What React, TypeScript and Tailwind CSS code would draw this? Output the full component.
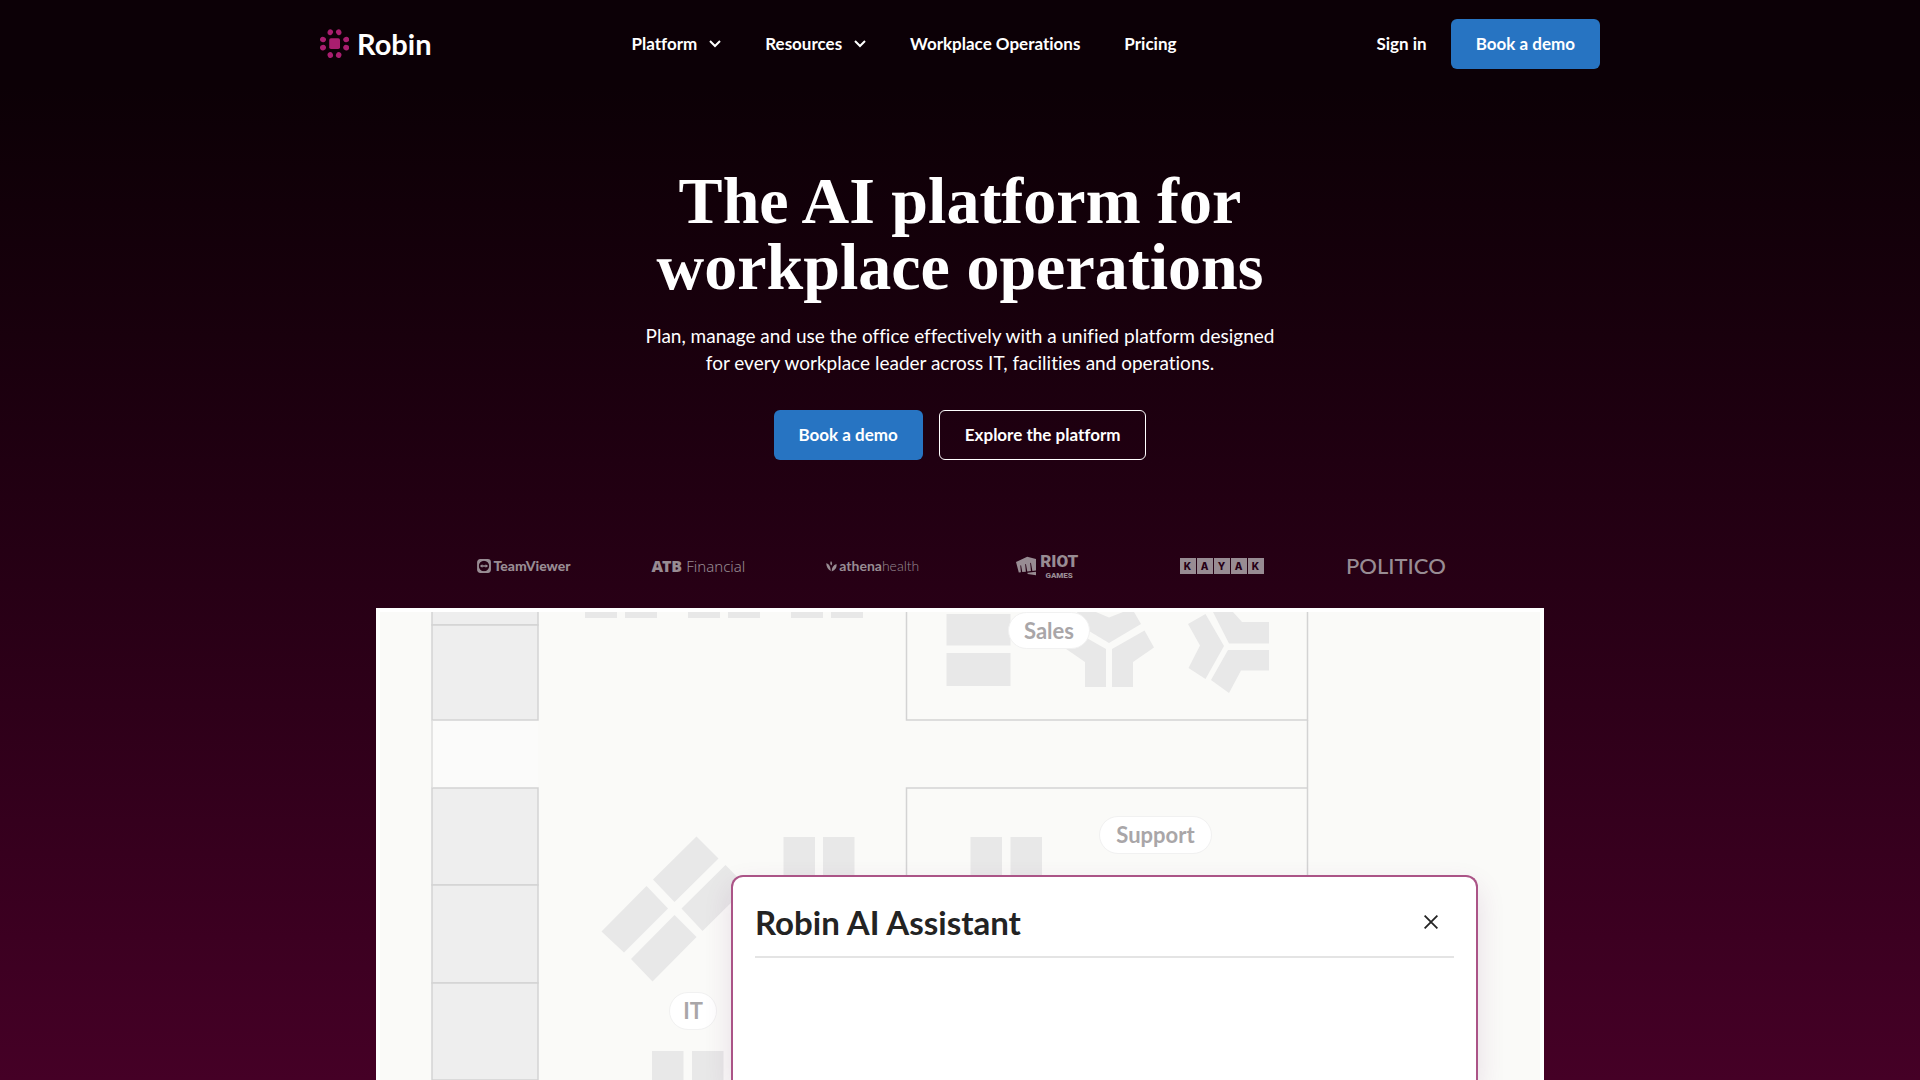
import type { ReactNode } from "react";

const sans = "font-['Lato','Open_Sans',sans-serif] [font-variant-ligatures:none]";

function Chevron() {
  return (
    <svg viewBox="0 0 12 8" className="h-2 w-3" fill="none" stroke="currentColor" strokeWidth="2" aria-hidden="true">
      <path d="M1 1l5 5 5-5" />
    </svg>
  );
}

function RobinLogo() {
  const dots = [
    [10.3, 3.2, 20], [18.7, 3.2, -20], [26.2, 10.5, 70], [26.2, 18.6, -70],
    [18.7, 26, 20], [10.3, 26, -20], [3, 18.6, 70], [3, 10.5, -70],
  ];
  return (
    <a href="#" aria-label="Robin home" className="flex items-center gap-2">
      <svg viewBox="0 0 29 29" className="size-[29px]" fill="#a91e6f" aria-hidden="true">
        <rect x="9.2" y="9.2" width="10.8" height="10.8" rx="1.8" />
        {dots.map(([x, y, r]) => (
          <ellipse key={`${x}-${y}`} cx={x} cy={y} rx="2.7" ry="3" transform={`rotate(${r} ${x} ${y})`} />
        ))}
      </svg>
      <span className="text-[29px] leading-8 font-bold">Robin</span>
    </a>
  );
}

function Header() {
  return (
    <header className="bg-[#0c0006]">
      <div className="mx-auto flex h-[87px] w-full max-w-[1280px] items-center justify-between">
        <RobinLogo />
        <nav aria-label="Main" className="flex w-[545px] items-center justify-between text-[17px] leading-6 font-bold">
          <button type="button" className="flex items-center gap-3">Platform <Chevron /></button>
          <button type="button" className="flex items-center gap-3">Resources <Chevron /></button>
          <a href="#">Workplace Operations</a>
          <a href="#">Pricing</a>
        </nav>
        <div className="flex items-center gap-6 text-[17px] leading-6 font-bold">
          <a href="#">Sign in</a>
          <a href="#" className="flex h-[50px] items-center rounded-md bg-[#2774c2] px-[25px]">Book a demo</a>
        </div>
      </div>
    </header>
  );
}

function LogoCell({ label, children }: { label: string; children: ReactNode }) {
  return (
    <li aria-label={label} className="flex h-8 w-24 items-center justify-center whitespace-nowrap">
      {children}
    </li>
  );
}

function Customers() {
  return (
    <ul className="mx-auto mt-[90px] flex w-full max-w-[968px] items-center justify-between text-[#988c93]">
      <LogoCell label="TeamViewer">
        <svg viewBox="0 0 14 14" className="mr-0.5 size-[14px] shrink-0" aria-hidden="true">
          <rect x="0.8" y="0.8" width="12.4" height="12.4" rx="2.4" fill="none" stroke="currentColor" strokeWidth="1.4" />
          <path fill="currentColor" fillRule="evenodd" d="M1 1h12v12H1zM7 1.8a5.2 5.2 0 100 10.4A5.2 5.2 0 007 1.8z" />
          <path fill="currentColor" d="M2.8 7l2.6-1.8v1.1h3.2V5.2L11.2 7 8.6 8.8V7.7H5.4v1.1z" />
        </svg>
        <span className="text-[14px] leading-5 font-black">TeamViewer</span>
      </LogoCell>
      <LogoCell label="ATB Financial">
        <span className="font-['Noto_Sans',sans-serif] text-[16px] leading-5 font-black">ATB</span>
        <span className="ml-1 font-['Noto_Sans',sans-serif] text-[15px] leading-5 font-light">Financial</span>
      </LogoCell>
      <LogoCell label="athenahealth">
        <svg viewBox="0 0 11 11" className="mr-0.5 size-[11px] shrink-0" fill="currentColor" aria-hidden="true">
          <path d="M5 0c1.4 1.5 1.5 3.2.3 4.6C4 3.4 3.9 1.7 5 0zM.2 2.3c2.6.5 4.3 2.6 4.6 7.7C2.2 8.8.3 6 .2 2.3zM10.5 3c.5 3.5-1 6-4.8 7.4C5.6 6.6 7.3 4 10.5 3z" />
        </svg>
        <span className="text-[14px] leading-5 font-bold">athena</span>
        <span className="text-[14px] leading-5 font-light">health</span>
      </LogoCell>
      <LogoCell label="Riot Games">
        <svg viewBox="0 0 24 24" className="mr-1 size-5 shrink-0" fill="currentColor" aria-hidden="true">
          <path d="M13.458.86 0 7.093l3.353 12.761 2.552-.313-.701-8.024.838-.373 1.447 8.202 4.361-.535-.775-8.857.83-.37 1.591 9.025 4.412-.542-.849-9.708.84-.374 1.74 9.87L24 17.318V3.5Zm.316 19.356.222 1.256L24 23.14v-4.18l-10.22 1.256Z" />
        </svg>
        <span className="flex flex-col items-center gap-0.5 font-['Roboto',sans-serif] font-black">
          <span className="text-[17px] leading-4">RIOT</span>
          <span className="text-[8px] leading-[9px]">GAMES</span>
        </span>
      </LogoCell>
      <LogoCell label="Kayak">
        <span className="flex gap-px font-['Inter',sans-serif] text-[10px] leading-4 font-extrabold text-[#260016]">
          {["K", "A", "Y", "A", "K"].map((c, i) => (
            <span key={i} className="h-4 w-4 bg-[#988c93] text-center">{c}</span>
          ))}
        </span>
      </LogoCell>
      <LogoCell label="Politico">
        <span className="text-[22px] leading-6 font-medium">POLITICO</span>
      </LogoCell>
    </ul>
  );
}

function FloorPlan() {
  const rect = (x: number, y: number, w: number, h: number) => (
    <rect key={`${x}-${y}`} x={x} y={y} width={w} height={h} />
  );
  return (
    <svg viewBox="4 4 1160 468" preserveAspectRatio="xMidYMin slice" className="block h-full w-full bg-[#fafaf8]" aria-hidden="true">
      <rect x="57" y="113" width="105" height="66" fill="#fbfbfa" />
      <g fill="#eeeeee" stroke="#d3d3d3" strokeWidth="1.5">
        <rect x="56" y="-20" width="106" height="37" />
        <rect x="56" y="17" width="106" height="95" />
        <rect x="56" y="180" width="106" height="97" />
        <rect x="56" y="277" width="106" height="98" />
        <rect x="56" y="375" width="106" height="97" />
      </g>
      <g fill="none" stroke="#d3d3d3" strokeWidth="1.5">
        <path d="M56 112v68" stroke="#dedede" />
        <rect x="530.5" y="-20" width="401" height="132" />
        <path d="M530.5 300V180H931.5M931.5 112V300" />
      </g>
      <g fill="#e8e8e8">
        {[209, 249, 312, 352, 415, 455].map((x) => rect(x, 0, 32, 10))}
        {[407.5, 447].map((x) => rect(x, 229, 31.5, 60))}
        {[276, 316].map((x) => rect(x, 443, 31.5, 60))}
        {[594.5, 634.5].map((x) => rect(x, 229, 31.5, 60))}
        {rect(570.5, 6, 64, 31.5)}
        {rect(570.5, 45, 64, 33)}
        <path d="M320.5 228.5l22 22-44 43.5-21.5-22.5zM349.5 257l21.5 22-44.5 44-21-22.5zM270.5 278l21.5 22.5-44 44-22.5-21zM298.5 307l22 22-44 44.5-21.5-22.5z" />
        <path d="M701 4h19l13 5.5L747 4h11l7 12-32 19-25-15zM768.5 22.5l9.5 17-21 14.5v25h-21V41zM697.5 22.5l-9.5 17 21 14.5v25h21V41z" />
        <path d="M837 4h20l9 10h27v21.5h-40zM829.5 6l18.5 32-18.5 33-17-11 11.5-22.5L812 16zM852 42h41v20.5h-28L853 85l-18-13z" />
      </g>
    </svg>
  );
}

const pill =
  "absolute flex items-center justify-center rounded-full border border-[#f1f1f1] bg-white text-[22px] leading-6 font-bold text-[#a9a6a8]";

function ProductPreview() {
  return (
    <section aria-label="Product preview" className="relative mx-auto mt-[26px] flex w-full max-w-[1168px] flex-1 flex-col overflow-hidden bg-white px-1 pt-1">
      <div className="h-[468px] flex-1">
        <FloorPlan />
      </div>
      <span className={`${pill} top-1 left-[632px] h-[37px] w-[82px]`}>Sales</span>
      <span className={`${pill} top-[208px] left-[723px] h-[38px] w-[113px]`}>Support</span>
      <span className={`${pill} top-[384px] left-[293px] h-[38px] w-12`}>IT</span>
      <div role="dialog" aria-label="Robin AI Assistant" className="absolute top-[267px] right-[66px] bottom-0 left-[355px] rounded-t-xl border-2 border-b-0 border-[#ab5487] bg-white px-[22px] shadow-[0_12px_28px_rgba(110,40,110,0.14)]">
        <div className="flex h-[81px] items-center justify-between border-b-2 border-[#e4e4e4] pt-2.5 pr-4">
          <h2 className="text-[33px] leading-10 font-bold text-[#232323]">Robin AI Assistant</h2>
          <button type="button" aria-label="Close" className="text-[#232323]">
            <svg viewBox="0 0 14 14" className="size-[14px]" fill="none" stroke="currentColor" strokeWidth="1.8" aria-hidden="true">
              <path d="M.6.6l12.8 12.8M13.4.6L.6 13.4" />
            </svg>
          </button>
        </div>
      </div>
    </section>
  );
}

export default function App() {
  return (
    <div className={`${sans} flex min-h-screen flex-col bg-[#0c0006] text-white`}>
      <Header />
      <main className="flex flex-1 flex-col bg-linear-to-b from-[#0c0006] to-[#450026] pt-[81px]">
        <h1 className="text-center font-['Liberation_Serif',serif] text-[66px] leading-[66px] font-bold">
          The AI platform for
          <br />
          workplace operations
        </h1>
        <p className="mt-[22px] text-center text-[19px] leading-[27px]">
          Plan, manage and use the office effectively with a unified platform designed
          <br />
          for every workplace leader across IT, facilities and operations.
        </p>
        <div className="mt-[34px] flex justify-center gap-4 text-[17px] leading-6 font-bold">
          <a href="#" className="flex h-[50px] items-center rounded-md bg-[#2774c2] px-[25px]">Book a demo</a>
          <a href="#" className="flex h-[50px] items-center rounded-md border border-white px-[25px]">Explore the platform</a>
        </div>
        <Customers />
        <ProductPreview />
      </main>
    </div>
  );
}
